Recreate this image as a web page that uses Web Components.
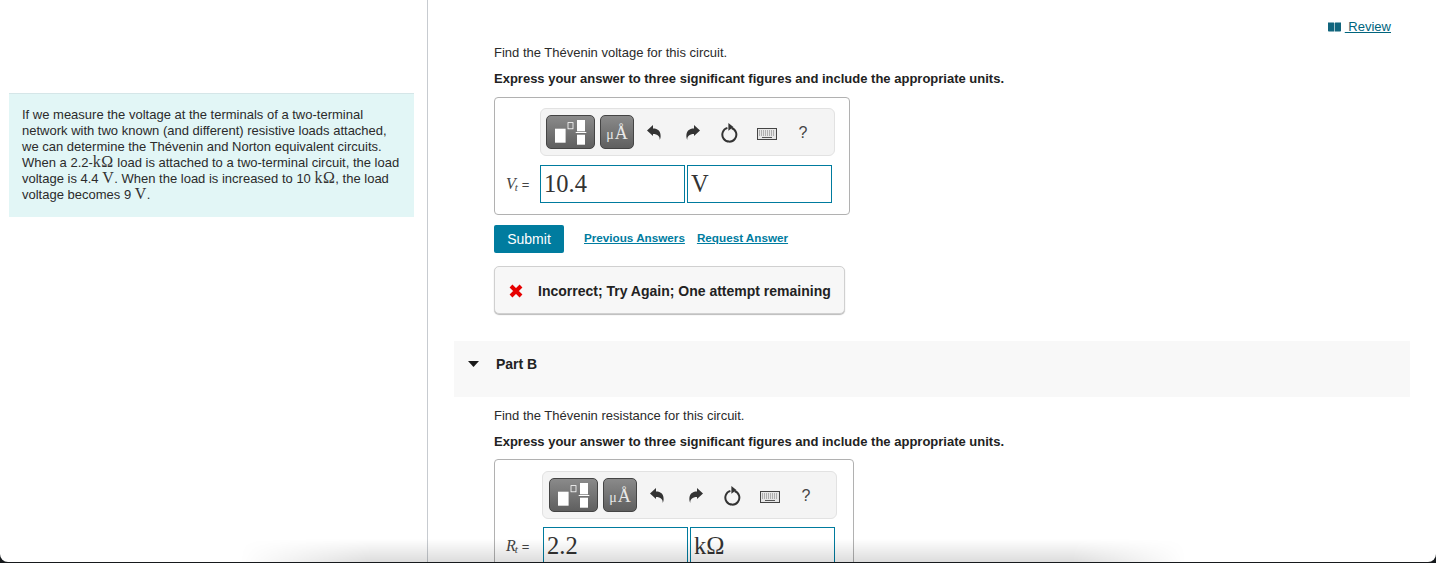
<!DOCTYPE html>
<html lang="en">
<head>
<meta charset="utf-8">
<title>Part A</title>
<style>
  html, body { margin: 0; height: 563px; overflow: hidden; background: #fff; }
  body { font-family: "Liberation Sans", Arial, sans-serif; font-size: 13px; color: #222; }
</style>
</head>
<body>
<x-page>
  <x-intro slot="left">
    If we measure the voltage at the terminals of a two-terminal<br>
    network with two known (and different) resistive loads attached,<br>
    we can determine the Thévenin and Norton equivalent circuits.<br>
    When a 2.2-<x-unit>kΩ</x-unit> load is attached to a two-terminal circuit, the load<br>
    voltage is 4.4 <x-unit>V</x-unit>. When the load is increased to 10 <x-unit>kΩ</x-unit>, the load<br>
    voltage becomes 9 <x-unit>V</x-unit>.
  </x-intro>

  <x-review></x-review>

  <x-prompt style="--top:9px">Find the Thévenin voltage for this circuit.</x-prompt>
  <x-answer symbol="V" sub="t" value="10.4" unit="V" style="--bar-left:45px;--box-w:356px"></x-answer>
  <x-actions></x-actions>
  <x-feedback>Incorrect; Try Again; One attempt remaining</x-feedback>

  <x-part-head>Part B</x-part-head>

  <x-prompt style="--top:11px">Find the Thévenin resistance for this circuit.</x-prompt>
  <x-answer symbol="R" sub="t" value="2.2" unit="kΩ" style="--box-top:9px;--bar-top:11px;--row-gap:8px;--bar-pad:6px;--bar-left:47px;--box-w:360px;--field-left:48px"></x-answer>
</x-page>
<x-window-edge></x-window-edge>

<template id="t-page">
  <style>
    :host { display: grid; grid-template-columns: 428px 1fr; height: 563px; overflow: hidden; }
    .left { border-right: 1px solid #c7cbd0; padding: 93px 13px 0 9px; }
    .right { padding-left: 66px; padding-right: 26px; }
  </style>
  <div class="left"><slot name="left"></slot></div>
  <div class="right"><slot></slot></div>
</template>

<template id="t-intro">
  <style>
    :host { display: block; background: #e2f6f6; border-top: 1px solid #d5e6e8; padding: 13px 13px 15px 13px; height: 95px; line-height: 16px; font-size: 13px; color: #2b2b2b; }
  </style>
  <slot></slot>
</template>

<template id="t-unit"><style>
    :host { display: inline; font-family: "Liberation Serif", "DejaVu Serif", serif; font-size: 16px; letter-spacing: .5px; line-height: 0; color: #333; }
  </style><slot></slot></template>

<template id="t-review">
  <style>
    :host { display: flex; justify-content: flex-end; height: 19px; padding: 17px 19px 0 0; font-size: 13px; line-height: 16px; }
    a { color: #00647d; text-decoration: none; display: inline-flex; align-items: center; white-space: pre; }
    a span { text-decoration: underline; }
    svg { width: 13px; height: 10px; margin-right: 4px; }
  </style>
  <a href="#"><svg viewBox="0 0 13 10"><path d="M0 .5h5.6c.4 0 .6.2.6.6v8.4H.8c-.5 0-.8-.3-.8-.8zM13 .5H7.4c-.4 0-.6.2-.6.6v8.4h5.4c.5 0 .8-.3.8-.8z" fill="#11657d"/></svg><span> Review</span></a>
</template>

<template id="t-prompt">
  <style>
    :host { display: block; padding-top: var(--top, 0); font-size: 13px; line-height: 16px; color: #2b2b2b; }
    p { margin: 0; }
    b { display: block; margin-top: 10px; font-weight: 700; color: #222; }
  </style>
  <p><slot></slot></p>
  <b>Express your answer to three significant figures and include the appropriate units.</b>
</template>

<template id="t-answer">
  <style>
    :host { display: block; box-sizing: border-box; width: var(--box-w, 356px); height: 118px; margin-top: var(--box-top, 10px); border: 1px solid #b1b1b1; border-radius: 4px; background: #fff; }
    .bar { box-sizing: border-box; width: 295px; height: 48px; margin: var(--bar-top, 10px) 0 0 var(--bar-left, 45px); background: #f4f4f4; border: 1px solid #e2e2e2; border-radius: 6px; display: flex; align-items: center; padding: 0 0 0 var(--bar-pad, 5px); }
    .tpl { width: 49px; height: 34px; box-sizing: border-box; border: 1px solid #444; border-radius: 5px; background: linear-gradient(#8a8a8a, #5f5f5f); display: flex; align-items: center; justify-content: center; }
    .tpl + .tpl { margin-left: 5px; width: 34px; color: #e8e8e8; font-family: "Liberation Serif", serif; font-size: 18px; align-items: baseline; padding-top: 7px; }
    .tpl small { font-size: 14px; margin-right: 1px; }
    .icon { display: flex; justify-content: center; align-items: center; width: 37px; height: 34px; }
    .icon svg { display: block; }
    .i1 { margin-left: 1px; width: 38px; margin-right: 1px; }
    .spin { padding-top: 2px; box-sizing: border-box; }
    .keys { padding-top: 4px; box-sizing: border-box; }
    .help { color: #444; font-size: 16px; width: 36px; margin-left: 0; padding-top: 2px; box-sizing: border-box; }
    .row { display: flex; align-items: center; margin-top: var(--row-gap, 9px); height: 38px; }
    .label { width: var(--field-left, 45px); box-sizing: border-box; padding-left: 11px; font-size: 13px; color: #444; white-space: nowrap; }
    .label i { font-family: "Liberation Serif", serif; font-size: 16px; }
    .label sub { font-family: "Liberation Serif", serif; font-style: italic; font-size: 11px; line-height: 0; vertical-align: -2px; margin-left: -1px; margin-right: 4px; }
    .field { box-sizing: border-box; width: 145px; height: 38px; border: 1px solid #007b9e; padding: 3px 0 0 3px; font-family: "Liberation Serif", serif; font-size: 24.5px; line-height: 30px; color: #333; background: #fff; }
    .field + .field { margin-left: 2px; }
  </style>
  <div class="bar">
    <span class="tpl">
      <svg width="32" height="25" viewBox="0 0 32 25"><rect x="0" y="8.7" width="10.6" height="14" fill="#fff"/><rect x="13" y="2.6" width="5" height="6.2" fill="none" stroke="#fff" stroke-width=".8"/><rect x="22" y="0" width="8" height="11.3" fill="#fff"/><rect x="20.7" y="12" width="10.6" height="1" fill="#fff"/><rect x="22" y="14.7" width="8" height="10" fill="#fff"/></svg>
    </span>
    <span class="tpl"><small>μ</small>Å</span>
    <span class="icon i1"><svg width="14" height="15" viewBox="0 0 14 15"><path d="M0 5.5 6 0v3.4c5 0 8 2.6 7.6 8.6-.1 1-.4 2-.9 3 .3-3.600-2-6-6.700-6V11z" fill="#333"/></svg></span>
    <span class="icon"><svg width="14" height="15" viewBox="0 0 14 15"><path d="M14 5.500 8 0v3.400C3 3.400 0 6 .4 12c.1 1 .4 2 .9 3-.3-3.600 2-6 6.700-6V11z" fill="#333"/></svg></span>
    <span class="icon spin"><svg width="17" height="20" viewBox="0 0 17 20"><path d="M6.400 4.900a7 7 0 1 0 4.200.1" fill="none" stroke="#333" stroke-width="2"/><path d="M7.400 0v7.800l5-3.900z" fill="#333"/></svg></span>
    <span class="icon keys"><svg width="20" height="12" viewBox="0 0 20 12"><rect x=".5" y=".5" width="19" height="11" fill="#e6e6e6" stroke="#444"/><path d="M2 3h16M2 5h16M2 7h16" stroke="#777" stroke-dasharray="1 1"/><path d="M5 9.500h10" stroke="#555"/></svg></span>
    <span class="icon help">?</span>
  </div>
  <div class="row">
    <span class="label"><i id="sym"></i><sub id="sub"></sub>=</span>
    <div class="field" id="value"></div>
    <div class="field" id="unit"></div>
  </div>
</template>

<template id="t-actions">
  <style>
    :host { display: flex; align-items: center; margin-top: 10px; height: 28px; }
    button { all: unset; box-sizing: border-box; width: 70px; height: 28px; background: #007c9f; color: #fff; border-radius: 2px; text-align: center; font-size: 14px; line-height: 28px; }
    a { color: #007c9f; font-weight: 700; font-size: 11.7px; margin-left: 12px; position: relative; top: -2px; }
    button + a { margin-left: 20px; }
  </style>
  <button>Submit</button>
  <a href="#">Previous Answers</a>
  <a href="#">Request Answer</a>
</template>

<template id="t-feedback">
  <style>
    :host { display: flex; align-items: center; box-sizing: border-box; width: 351px; height: 48px; margin-top: 13px; padding: 1px 0 0 14px; background: #f7f7f7; border: 1px solid #d0d0d0; border-radius: 5px; box-shadow: 0 1px 1px #bbb; font-size: 14px; font-weight: 700; color: #222; white-space: nowrap; }
    svg { margin-right: 15px; flex: none; }
  </style>
  <svg width="14" height="14" viewBox="0 0 14 14"><path d="M2 2 12 12M12 2 2 12" stroke="#e60000" stroke-width="4"/></svg>
  <slot></slot>
</template>

<template id="t-part">
  <style>
    :host { display: flex; align-items: center; box-sizing: border-box; height: 56px; margin: 27px 0 0 -40px; padding: 0 0 10px 14px; background: #f8f8f8; font-size: 14px; font-weight: 700; color: #222; }
    svg { margin-right: 17px; }
  </style>
  <svg width="11" height="6" viewBox="0 0 11 6"><path d="M0 0h11L5.500 6z" fill="#1a1a1a"/></svg>
  <slot></slot>
</template>

<template id="t-edge">
  <style>
    :host { display: block; position: fixed; left: 0; right: 0; bottom: 0; height: 26px; pointer-events: none; overflow: hidden; }
    .shade { position: absolute; left: 240px; right: 250px; bottom: 0; height: 24px; background: linear-gradient(to top, rgba(0,0,0,.14), rgba(0,0,0,0)); -webkit-mask-image: linear-gradient(to right, transparent, #000 14%, #000 88%, transparent); mask-image: linear-gradient(to right, transparent, #000 14%, #000 88%, transparent); }
    /* page sheet with rounded foot, the dark window behind shows through its outline */
    .sheet { position: absolute; left: 0; right: 0; bottom: 1.5px; height: 24.5px; border-radius: 0 0 8px 8px; box-shadow: 0 0 0 10px #16191c; }
  </style>
  <div class="shade"></div>
  <div class="sheet"></div>
</template>

<script>
  // shared helper: every element stamps its template into an open shadow root
  class Base extends HTMLElement {
    constructor() {
      super();
      const tpl = document.getElementById(this.constructor.tpl);
      this.attachShadow({ mode: 'open' }).appendChild(tpl.content.cloneNode(true));
    }
  }
  class XPage extends Base { static tpl = 't-page'; }
  class XIntro extends Base { static tpl = 't-intro'; }
  class XUnit extends Base { static tpl = 't-unit'; }
  class XReview extends Base { static tpl = 't-review'; }
  class XPrompt extends Base { static tpl = 't-prompt'; }
  class XActions extends Base { static tpl = 't-actions'; }
  class XFeedback extends Base { static tpl = 't-feedback'; }
  class XPartHead extends Base { static tpl = 't-part'; }
  class XWindowEdge extends Base { static tpl = 't-edge'; }
  class XAnswer extends Base {
    static tpl = 't-answer';
    connectedCallback() {
      const root = this.shadowRoot;
      root.getElementById('sym').textContent = this.getAttribute('symbol');
      root.getElementById('sub').textContent = this.getAttribute('sub');
      root.getElementById('value').textContent = this.getAttribute('value');
      root.getElementById('unit').textContent = this.getAttribute('unit');
    }
  }
  customElements.define('x-page', XPage);
  customElements.define('x-intro', XIntro);
  customElements.define('x-unit', XUnit);
  customElements.define('x-review', XReview);
  customElements.define('x-prompt', XPrompt);
  customElements.define('x-answer', XAnswer);
  customElements.define('x-actions', XActions);
  customElements.define('x-feedback', XFeedback);
  customElements.define('x-part-head', XPartHead);
  customElements.define('x-window-edge', XWindowEdge);
</script>
</body>
</html>
